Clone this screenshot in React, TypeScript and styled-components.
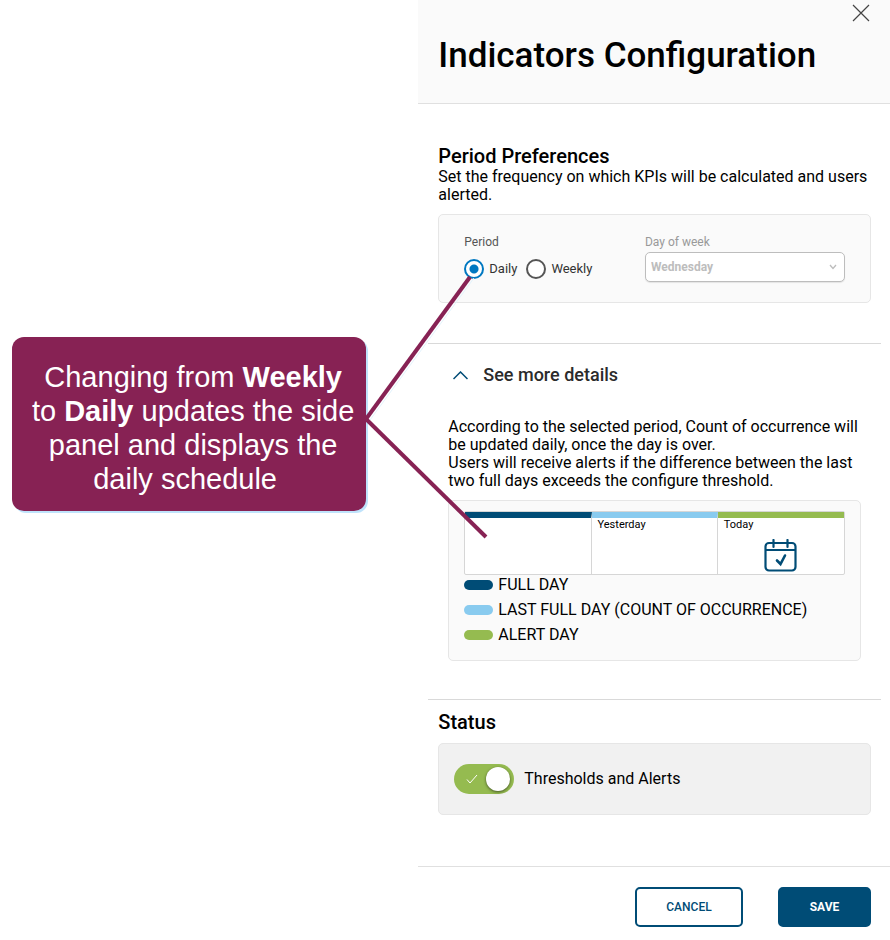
import React, { useState } from "react";
import styled, { createGlobalStyle } from "styled-components";

const NAVY = "#004c76";
const SKY = "#89cbef";
const GREEN = "#95bb50";
const PLUM = "#872254";

const GlobalStyle = createGlobalStyle`
  *, *::before, *::after { box-sizing: border-box; }
  body {
    margin: 0;
    background: #fff;
    color: #000;
    font-family: Roboto, "Liberation Sans", sans-serif;
    font-size: 16px;
    line-height: 18px;
  }
  h1, h2, p, ul, fieldset, legend { margin: 0; padding: 0; border: 0; }
  ul { list-style: none; }
  button, select, input { font-family: inherit; margin: 0; }
`;

const Page = styled.div`
  display: grid;
  grid-template-columns: minmax(0, 47fr) minmax(0, 53fr);
  min-height: 100vh;
`;

const NoteColumn = styled.aside`
  padding: 337px 52px 0 12px;
`;

const Callout = styled.div`
  position: relative;
  z-index: 1;
  padding: 23px 8px 15px 16px;
  border-radius: 12px;
  background: ${PLUM};
  box-shadow: 2px 2px 0 #bfe3fb;
  color: #fff;
  font-family: "Liberation Sans", Arial, sans-serif;
  font-size: 29px;
  line-height: 34px;
  text-align: center;
`;

const Connectors = styled.svg`
  position: absolute;
  left: 100%;
  top: -60px;
  overflow: visible;
  pointer-events: none;
`;

const Panel = styled.main`
  display: flex;
  flex-direction: column;
`;

const Header = styled.header`
  display: flex;
  flex-direction: column;
  padding: 4px 20px 24px;
  border-bottom: 1px solid #e0e0e0;
  background: #fafafa;
`;

const CloseButton = styled.button`
  align-self: flex-end;
  display: flex;
  padding: 0;
  border: 0;
  background: none;
  cursor: pointer;
`;

const Title = styled.h1`
  margin-top: 11px;
  font-size: 35px;
  line-height: 46px;
  font-weight: 500;
`;

const Body = styled.div`
  flex: 1;
  padding: 41px 9px 0 10px;
`;

const Section = styled.section<{ $divided?: boolean; $top?: number }>`
  padding: ${(p) => p.$top ?? 0}px 10px 0;
  border-top: ${(p) => (p.$divided ? "1px solid #d9d9d9" : "0")};
`;

const Spacer = styled.div`
  height: 38px;
`;

const SectionTitle = styled.h2`
  font-size: 20px;
  line-height: 22px;
  font-weight: 500;
`;

const Intro = styled.p`
  margin-top: 1px;
`;

const Card = styled.div<{ $tone?: string }>`
  border: 1px solid #e6e6e6;
  border-radius: 5px;
  background: ${(p) => p.$tone ?? "#fafafa"};
`;

const PeriodCard = styled(Card)`
  display: flex;
  justify-content: space-between;
  margin: 10px 0 40px;
  padding: 18px 25px 20px;
`;

const RadioGroup = styled.fieldset`
  min-width: 0;
`;

const FieldLabel = styled.div<{ $muted?: boolean }>`
  font-size: 12px;
  line-height: 18px;
  color: ${(p) => (p.$muted ? "#999" : "#555")};
`;

const RadioRow = styled.div`
  display: flex;
  gap: 9px;
  margin-top: 8px;
`;

const RadioLabel = styled.label`
  display: flex;
  align-items: center;
  gap: 5px;
  font-size: 13px;
  line-height: 20px;
  color: #333;
`;

const Radio = styled.input`
  appearance: none;
  width: 20px;
  height: 20px;
  border: 2px solid #555;
  border-radius: 50%;
  background: #fff;
  &:checked {
    border-color: #0078c1;
    background: radial-gradient(circle, #0078c1 0 4px, #fff 5px);
  }
`;

const DayField = styled.label`
  width: 200px;
`;

const SelectShell = styled.div`
  position: relative;
  margin-top: 1px;
`;

const DaySelect = styled.select`
  appearance: none;
  display: block;
  width: 100%;
  height: 30px;
  padding: 0 24px 0 5px;
  border: 1px solid #bdbdbd;
  border-radius: 5px;
  background: #fff;
  box-shadow: 0 1px 1px #e4e4e4;
  color: #333;
  font-size: 12px;
  font-weight: 700;
  &:disabled { color: #bdbdbd; opacity: 1; }
`;

const SelectArrow = styled.svg`
  position: absolute;
  right: 8px;
  top: 12px;
  pointer-events: none;
`;

const DetailsToggle = styled.button`
  display: flex;
  align-items: center;
  gap: 15px;
  padding: 0 15px;
  border: 0;
  background: none;
  color: #2b2b2b;
  font-size: 18px;
  line-height: 22px;
  font-weight: 500;
  cursor: pointer;
`;

const Details = styled.div`
  padding: 32px 10px 0;
`;

const ScheduleCard = styled(Card)`
  margin-top: 10px;
  padding: 10px 15px 16px;
`;

const Schedule = styled.ul`
  display: grid;
  grid-template-columns: repeat(3, minmax(0, 1fr));
  border: 1px solid #d6d6d6;
  border-radius: 2px;
  background: #fff;
`;

const Day = styled.li<{ $color: string }>`
  display: flex;
  flex-direction: column;
  min-height: 62px;
  border-top: 6px solid ${(p) => p.$color};
  font-size: 11px;
  line-height: 14px;
  &:not(:last-child) { border-right: 1px solid #d6d6d6; }
`;

const DayName = styled.span`
  padding-left: 6px;
`;

const CalendarIcon = styled.svg`
  align-self: center;
  margin-top: 7px;
`;

const Legend = styled.ul`
  display: flex;
  flex-direction: column;
  gap: 6px;
`;

const LegendItem = styled.li`
  display: flex;
  align-items: center;
  gap: 5px;
  line-height: 19px;
`;

const Swatch = styled.span<{ $color: string }>`
  width: 29px;
  height: 10px;
  border-radius: 5px;
  background: ${(p) => p.$color};
`;

const StatusCard = styled(Card)`
  margin-top: 10px;
  padding: 20px 15px;
`;

const SwitchLabel = styled.label`
  display: flex;
  align-items: center;
  gap: 10px;
  line-height: 30px;
`;

const SwitchTrack = styled.span<{ $on: boolean }>`
  position: relative;
  display: flex;
  align-items: center;
  justify-content: ${(p) => (p.$on ? "flex-end" : "flex-start")};
  gap: 8px;
  width: 60px;
  height: 30px;
  padding: 0 4px;
  border-radius: 15px;
  background: ${(p) => (p.$on ? GREEN : "#aaa")};
`;

const SwitchInput = styled.input`
  position: absolute;
  inset: 0;
  width: 100%;
  height: 100%;
  opacity: 0;
  cursor: pointer;
`;

const Knob = styled.span`
  width: 24px;
  height: 24px;
  border-radius: 50%;
  background: #fff;
  box-shadow: 0 1px 3px rgba(0, 0, 0, 0.55);
`;

const Footer = styled.footer`
  display: flex;
  justify-content: flex-end;
  gap: 35px;
  padding: 20px 19px 13px;
  border-top: 1px solid #e0e0e0;
`;

const ActionButton = styled.button<{ $primary?: boolean }>`
  min-width: ${(p) => (p.$primary ? 93 : 108)}px;
  height: 40px;
  padding: 0 16px;
  border: 2px solid ${NAVY};
  border-radius: 5px;
  background: ${(p) => (p.$primary ? NAVY : "#fff")};
  color: ${(p) => (p.$primary ? "#fff" : NAVY)};
  font-size: 12px;
  font-weight: ${(p) => (p.$primary ? 700 : 500)};
  cursor: pointer;
`;

const days = [
  { name: "", color: NAVY, alert: false },
  { name: "Yesterday", color: SKY, alert: false },
  { name: "Today", color: GREEN, alert: true },
];

const legend = [
  { text: "FULL DAY", color: NAVY },
  { text: "LAST FULL DAY (COUNT OF OCCURRENCE)", color: SKY },
  { text: "ALERT DAY", color: GREEN },
];

export default function App() {
  const [period, setPeriod] = useState("daily");
  const [open, setOpen] = useState(true);
  const [alerts, setAlerts] = useState(true);

  return (
    <>
      <GlobalStyle />
      <Page>
        <NoteColumn>
          <Callout>
            Changing from <b>Weekly</b>
            <br />
            to <b>Daily</b> updates the side
            <br />
            panel and displays the
            <br />
            daily schedule&nbsp;&nbsp;
            <Connectors width="121" height="260" viewBox="0 0 121 260" aria-hidden="true">
              <path d="M4 143 108 1" stroke="#e3f3fd" strokeWidth="1" />
              <path d="M104 0 0 142" stroke={PLUM} strokeWidth="4" />
              <path d="M0 142 120 260" stroke={PLUM} strokeWidth="4" />
            </Connectors>
          </Callout>
        </NoteColumn>

        <Panel>
          <Header>
            <CloseButton type="button" aria-label="Close">
              <svg width="18" height="18" viewBox="0 0 18 18" fill="none" stroke="#444" strokeWidth="1.2">
                <path d="M1 1 17 17M17 1 1 17" />
              </svg>
            </CloseButton>
            <Title>Indicators Configuration</Title>
          </Header>

          <Body>
            <Section>
              <SectionTitle>Period Preferences</SectionTitle>
              <Intro>Set the frequency on which KPIs will be calculated and users alerted.</Intro>
              <PeriodCard>
                <RadioGroup>
                  <FieldLabel as="legend">Period</FieldLabel>
                  <RadioRow>
                    <RadioLabel>
                      <Radio
                        type="radio"
                        name="period"
                        checked={period === "daily"}
                        onChange={() => setPeriod("daily")}
                      />
                      Daily
                    </RadioLabel>
                    <RadioLabel>
                      <Radio
                        type="radio"
                        name="period"
                        checked={period === "weekly"}
                        onChange={() => setPeriod("weekly")}
                      />
                      Weekly
                    </RadioLabel>
                  </RadioRow>
                </RadioGroup>
                <DayField>
                  <FieldLabel $muted={period === "daily"}>Day of week</FieldLabel>
                  <SelectShell>
                    <DaySelect disabled={period === "daily"} defaultValue="Wednesday">
                      <option>Wednesday</option>
                    </DaySelect>
                    <SelectArrow width="8" height="6" viewBox="0 0 8 6" fill="none" stroke="#bdbdbd" strokeWidth="1.3">
                      <path d="M1 1 4 4.5 7 1" />
                    </SelectArrow>
                  </SelectShell>
                </DayField>
              </PeriodCard>
            </Section>

            <Section $divided $top={20}>
              <DetailsToggle type="button" aria-expanded={open} onClick={() => setOpen(!open)}>
                <svg width="15" height="9" viewBox="0 0 15 9" fill="none" stroke={NAVY} strokeWidth="1.5">
                  <path d={open ? "M.5 8 7.5 1 14.5 8" : "M.5 1 7.5 8 14.5 1"} />
                </svg>
                See more details
              </DetailsToggle>
              {open && (
                <Details>
                  <p>
                    According to the selected period, Count of occurrence will be updated daily, once the day is over.
                  </p>
                  <p>
                    Users will receive alerts if the difference between the last two full days exceeds the configure
                    threshold.
                  </p>
                  <ScheduleCard>
                    <Schedule>
                      {days.map((d) => (
                        <Day key={d.color} $color={d.color}>
                          <DayName>{d.name}</DayName>
                          {d.alert && (
                            <CalendarIcon width="33" height="33" viewBox="0 0 33 33" fill="none" stroke={NAVY}>
                              <rect x="1.5" y="4" width="30" height="27.5" rx="3.5" strokeWidth="2.2" />
                              <path d="M2 11H31M9.5 1V8M23.5 1V8" strokeWidth="2.2" strokeLinecap="round" />
                              <path d="M13 21.5 16.5 25 21 16.5" strokeWidth="2.6" strokeLinecap="round" />
                            </CalendarIcon>
                          )}
                        </Day>
                      ))}
                    </Schedule>
                    <Legend>
                      {legend.map((l) => (
                        <LegendItem key={l.text}>
                          <Swatch $color={l.color} />
                          {l.text}
                        </LegendItem>
                      ))}
                    </Legend>
                  </ScheduleCard>
                </Details>
              )}
            </Section>
            <Spacer />
            <Section $divided $top={11}>
              <SectionTitle>Status</SectionTitle>
              <StatusCard $tone="#f1f1f1">
                <SwitchLabel>
                  <SwitchTrack $on={alerts}>
                    {alerts && (
                      <svg width="12" height="10" viewBox="0 0 12 10" fill="none" stroke="#fff" strokeWidth="1">
                        <path d="M1 5.5 4 9 11 1" />
                      </svg>
                    )}
                    <Knob />
                    <SwitchInput
                      type="checkbox"
                      role="switch"
                      checked={alerts}
                      onChange={(e) => setAlerts(e.target.checked)}
                    />
                  </SwitchTrack>
                  Thresholds and Alerts
                </SwitchLabel>
              </StatusCard>
            </Section>
          </Body>

          <Footer>
            <ActionButton type="button">CANCEL</ActionButton>
            <ActionButton type="button" $primary>
              SAVE
            </ActionButton>
          </Footer>
        </Panel>
      </Page>
    </>
  );
}
